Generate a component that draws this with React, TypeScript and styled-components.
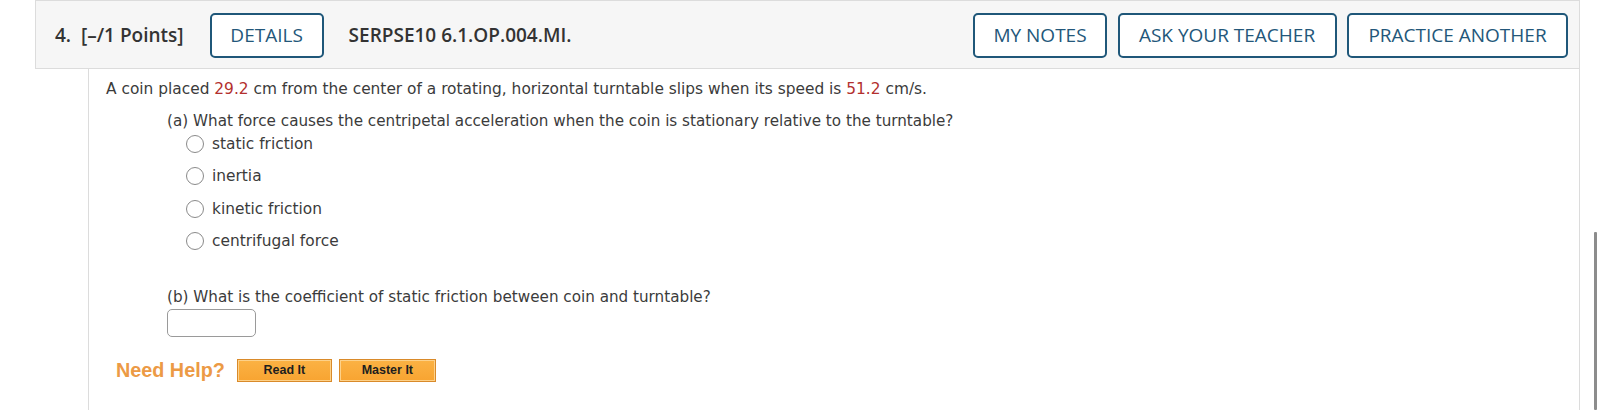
import React from "react";
import styled, { createGlobalStyle } from "styled-components";

const GlobalStyle = createGlobalStyle`
  html, body { margin: 0; padding: 0; background: #ffffff; }
  body { width: 1600px; height: 410px; overflow: hidden; position: relative; }
  * { box-sizing: border-box; }
`;

const Page = styled.div`
  width: 1600px;
  height: 410px;
  padding-left: 35px;
  position: relative;
`;

const Question = styled.section`
  width: 1545px;
  height: 410px;
  display: flex;
  flex-direction: column;
`;

const Header = styled.header`
  height: 69px;
  flex: none;
  display: flex;
  align-items: center;
  padding: 0 11px 0 19px;
  background: #f6f6f6;
  border: 1px solid #dcdcdc;
  font-family: "Open Sans", "Liberation Sans", sans-serif;
  font-size: 19px;
  color: #333333;
`;

const Title = styled.span<{ $gap: number }>`
  font-weight: 600;
  margin-right: ${(p) => p.$gap}px;
  white-space: nowrap;
`;

const Spacer = styled.div`
  flex: 1;
`;

const HeaderButtons = styled.div`
  display: flex;
  gap: 10.5px;
`;

const OutlineButton = styled.button<{ $w: number }>`
  width: ${(p) => p.$w}px;
  height: 45px;
  margin-top: 1px;
  border: 2px solid #1f5779;
  border-radius: 5px;
  background: #ffffff;
  color: #23577a;
  font-family: "Open Sans", "Liberation Sans", sans-serif;
  font-size: 19px;
  font-weight: 400;
  padding: 0;
  white-space: nowrap;
  display: flex;
  align-items: center;
  justify-content: center;
`;

const DetailsButton = styled(OutlineButton)`
  margin-right: 25px;
`;

const Body = styled.div`
  flex: 1;
  margin-left: 53px;
  border-left: 1px solid #dcdcdc;
  border-right: 1px solid #dcdcdc;
  padding: 10px 0 0 17px;
  font-family: "DejaVu Sans", Verdana, sans-serif;
  font-size: 15.4px;
  color: #3b3b3b;
`;

const Line = styled.p<{ $size?: number }>`
  margin: 0;
  line-height: 21px;
  white-space: nowrap;
  ${(p) => (p.$size ? `font-size: ${p.$size}px;` : "")}
`;

const Num = styled.span`
  color: #b3302e;
`;

const Part = styled.div<{ $top: number }>`
  padding-left: 61px;
  margin-top: ${(p) => p.$top}px;
`;

const Options = styled.div`
  display: flex;
  flex-direction: column;
  gap: 10.5px;
  padding-left: 19px;
  margin-top: 0.5px;
`;

const Option = styled.label`
  display: flex;
  align-items: center;
  gap: 8px;
  height: 22px;
  line-height: 22px;
`;

const Radio = styled.span`
  width: 18px;
  height: 18px;
  border-radius: 50%;
  border: 1.5px solid #8a8a8a;
  background: #ffffff;
  flex: none;
`;

const AnswerBox = styled.div`
  width: 89px;
  height: 28px;
  margin-top: 1px;
  border: 1px solid #9a9a9a;
  border-radius: 5px;
  background: #ffffff;
`;

const HelpRow = styled.div`
  display: flex;
  align-items: center;
  margin-top: 22px;
  margin-left: 10px;
  height: 23px;
`;

const NeedHelp = styled.span`
  font-family: "Liberation Sans", Arial, sans-serif;
  font-weight: 700;
  font-size: 19.8px;
  color: #ec9a45;
  margin-right: 12px;
`;

const HelpButton = styled.button<{ $w: number }>`
  width: ${(p) => p.$w}px;
  height: 23px;
  margin-right: 7px;
  padding: 0;
  border: 1px solid #d98a2a;
  box-shadow: inset 0 0 0 1px #fdd189;
  background: linear-gradient(#fbb244, #f8a431);
  font-family: "Liberation Sans", Arial, sans-serif;
  font-weight: 700;
  font-size: 12.5px;
  color: #1e1e1e;
`;

const ScrollThumb = styled.div`
  position: absolute;
  left: 1594px;
  top: 232px;
  width: 3px;
  height: 178px;
  background: #8c8c8c;
  border-radius: 1px;
`;

const options = ["static friction", "inertia", "kinetic friction", "centrifugal force"];

export default function App() {
  return (
    <>
      <GlobalStyle />
      <Page>
        <Question>
          <Header>
            <Title $gap={26}>4.&nbsp; [–/1 Points]</Title>
            <DetailsButton $w={114}>DETAILS</DetailsButton>
            <Title $gap={0}>SERPSE10 6.1.OP.004.MI.</Title>
            <Spacer />
            <HeaderButtons>
              <OutlineButton $w={134}>MY NOTES</OutlineButton>
              <OutlineButton $w={219}>ASK YOUR TEACHER</OutlineButton>
              <OutlineButton $w={221}>PRACTICE ANOTHER</OutlineButton>
            </HeaderButtons>
          </Header>
          <Body>
            <Line>
              A coin placed <Num>29.2</Num> cm from the center of a rotating, horizontal turntable slips when its speed is{" "}
              <Num>51.2</Num> cm/s.
            </Line>
            <Part $top={11}>
              <Line $size={15.2}>
                (a) What force causes the centripetal acceleration when the coin is stationary relative to the turntable?
              </Line>
              <Options>
                {options.map((o) => (
                  <Option key={o}>
                    <Radio />
                    {o}
                  </Option>
                ))}
              </Options>
            </Part>
            <Part $top={34.5}>
              <Line $size={15.2}>(b) What is the coefficient of static friction between coin and turntable?</Line>
              <AnswerBox />
            </Part>
            <HelpRow>
              <NeedHelp>Need Help?</NeedHelp>
              <HelpButton $w={95}>Read It</HelpButton>
              <HelpButton $w={97}>Master It</HelpButton>
            </HelpRow>
          </Body>
        </Question>
        <ScrollThumb />
      </Page>
    </>
  );
}
